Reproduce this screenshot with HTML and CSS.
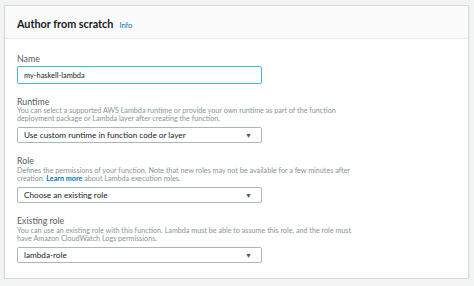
FILE: index.html
```html
<!DOCTYPE html>
<html lang="en">
<head>
    <meta charset="UTF-8">
    <title>Author from scratch</title>
    <link rel="stylesheet" href="styles.css">
</head>
<body>
    <div class="card">
        <div class="card-header">
            <h2>Author from scratch</h2>
            <a class="info" href="#">Info</a>
        </div>
        <div class="card-body">
            <div class="field">
                <label class="label">Name</label>
                <input class="text-input" type="text" value="my-haskell-lambda">
            </div>
            <div class="field">
                <label class="label">Runtime</label>
                <p class="desc">You can select a supported AWS Lambda runtime or provide your own runtime as part of the function deployment package or Lambda layer after creating the function.</p>
                <div class="select">Use custom runtime in function code or layer<span class="caret">▼</span></div>
            </div>
            <div class="field">
                <label class="label">Role</label>
                <p class="desc">Defines the permissions of your function. Note that new roles may not be available for a few minutes after creation. <a href="#">Learn more</a> about Lambda execution roles.</p>
                <div class="select">Choose an existing role<span class="caret">▼</span></div>
            </div>
            <div class="field">
                <label class="label">Existing role</label>
                <p class="desc">You can use an existing role with this function. Lambda must be able to assume this role, and the role must have Amazon CloudWatch Logs permissions.</p>
                <div class="select">lambda-role<span class="caret">▼</span></div>
            </div>
        </div>
    </div>
</body>
</html>
```

FILE: styles.css
```css
body {
    margin: 0;
    padding: 5px 5px 0 4px;
    background: #f2f3f3;
    font-family: 'Lato', sans-serif;
    color: #16191f;
}
.card {
    background: #fff;
    border: 1px solid #d5dbdb;
    box-shadow: 0 1px 1px rgba(0, 0, 0, 0.15);
    height: 274px;
    box-sizing: border-box;
}
.card-header {
    display: flex;
    align-items: baseline;
    background: #fafafa;
    border-bottom: 1px solid #eaeded;
    padding: 11px 12px 0;
    height: 33px;
    box-sizing: border-box;
}
.card-header h2 {
    margin: 0;
    font-size: 10.8px;
    font-weight: bold;
    line-height: 14px;
}
.info {
    margin-left: 6px;
    font-size: 7.5px;
    color: #0073bb;
    text-decoration: none;
}
.card-body {
    padding: 15px 12px 0;
}
.field {
    margin-bottom: 13px;
}
.label {
    display: block;
    font-size: 8.8px;
    color: #545b64;
    line-height: 10px;
}
.desc {
    margin: 0 0 4px;
    max-width: 340px;
    font-size: 7.2px;
    line-height: 8px;
    color: #879596;
}
.field:nth-child(3) .desc,
.field:nth-child(4) .desc {
    margin-top: 1px;
}
.desc a {
    color: #0073bb;
    font-weight: bold;
    text-decoration: none;
}
.text-input {
    display: block;
    margin-top: 2px;
    width: 245px;
    height: 18px;
    box-sizing: border-box;
    border: 1px solid #44b9d6;
    border-radius: 2px;
    padding: 0 6px;
    font-family: 'Lato', sans-serif;
    font-size: 7.4px;
    color: #16191f;
    outline: none;
}
.select {
    display: flex;
    justify-content: space-between;
    align-items: center;
    width: 245px;
    height: 16px;
    box-sizing: border-box;
    border: 1px solid #aab7b8;
    border-radius: 2px;
    padding: 0 9px 0 6px;
    font-size: 8.2px;
}
.caret {
    font-size: 7px;
    color: #545b64;
}
```
